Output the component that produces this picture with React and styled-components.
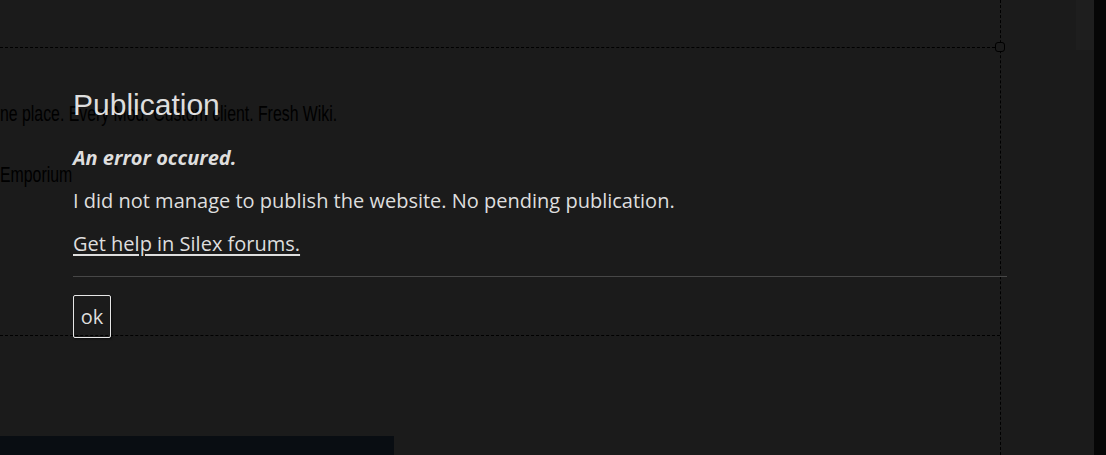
import React from "react";
import styled, { createGlobalStyle } from "styled-components";

const GlobalStyle = createGlobalStyle`
  html, body {
    margin: 0;
    padding: 0;
    background: #1b1b1b;
    overflow: hidden;
  }
`;

const Editor = styled.div`
  position: relative;
  display: flex;
  width: 1106px;
  height: 455px;
  background: #1b1b1b;
  overflow: hidden;
`;

const Stage = styled.div`
  position: relative;
  display: flex;
  flex-direction: column;
  width: 1000px;
  border-right: 1px dashed #000;
`;

const Section = styled.div`
  position: relative;
  height: ${(p) => p.$h}px;
  border-bottom: ${(p) => (p.$last ? "none" : "1px dashed #000")};
  display: flex;
  flex-direction: column;
  align-items: flex-start;
  padding: ${(p) => p.$pad || "0"};
  box-sizing: border-box;
  flex-shrink: 0;
`;

const Handle = styled.div`
  position: absolute;
  right: -5px;
  bottom: -5px;
  width: 8px;
  height: 8px;
  border: 1px solid #000;
  border-radius: 3px;
  background: #1b1b1b;
`;

/* the page font is a tall condensed face; squeeze a sans to get the look */
const PageText = styled.p`
  margin: 0 0 ${(p) => p.$mb || 0}px;
  font-family: "Liberation Sans", Arial, sans-serif;
  font-size: 22px;
  line-height: 24px;
  color: #000;
  white-space: nowrap;
  transform: scaleX(0.72);
  transform-origin: left center;
`;

const DarkBlock = styled.div`
  width: 394px;
  height: 40px;
  background: #090d12;
  margin-top: 100px;
`;

const Side = styled.div`
  flex: 1;
  display: flex;
  justify-content: flex-end;
`;

const Track = styled.div`
  width: 18px;
  display: flex;
  flex-direction: column;
`;

const Thumb = styled.div`
  height: 50px;
  background: #1e1e1e;
`;

const Scrollbar = styled.div`
  width: 12px;
  background: #060606;
`;

const Dialog = styled.div`
  position: absolute;
  left: 73px;
  top: 88px;
  width: 934px;
  color: #dedede;
  font-family: "Open Sans", sans-serif;
`;

const Title = styled.h2`
  margin: 0;
  font-family: "Liberation Sans", Arial, sans-serif;
  font-weight: normal;
  font-size: 30px;
  line-height: 34px;
`;

const Para = styled.p`
  margin: ${(p) => p.$mt}px 0 0;
  font-size: 20px;
  line-height: 26px;
  font-weight: ${(p) => (p.$strong ? 700 : 400)};
  font-style: ${(p) => (p.$strong ? "italic" : "normal")};
`;

const Link = styled.a`
  color: #dedede;
  text-decoration: underline;
  text-underline-offset: 3px;
`;

const Rule = styled.hr`
  margin: 19px 0 0;
  border: none;
  height: 1px;
  background: #474747;
`;

const OkButton = styled.button`
  display: block;
  margin-top: 18px;
  width: 38px;
  height: 43px;
  padding: 0;
  background: transparent;
  color: #dedede;
  border: 1px solid #e6e6e6;
  border-radius: 2px;
  font-family: "Open Sans", sans-serif;
  font-size: 20px;
  box-shadow: 1px 1px 2px rgba(0, 0, 0, 0.6);
`;

export default function App() {
  return (
    <>
      <GlobalStyle />
      <Editor>
        <Stage>
          <Section $h={48}>
            <Handle />
          </Section>
          <Section $h={288} $pad="54px 0 0">
            <PageText $mb={37}>ne place. Every Mod. Custom client. Fresh Wiki.</PageText>
            <PageText>Emporium</PageText>
          </Section>
          <Section $h={120} $last>
            <DarkBlock />
          </Section>
        </Stage>
        <Side>
          <Track>
            <Thumb />
          </Track>
          <Scrollbar />
        </Side>
        <Dialog>
          <Title>Publication</Title>
          <Para $strong $mt={23}>An error occured.</Para>
          <Para $mt={17}>I did not manage to publish the website. No pending publication.</Para>
          <Para $mt={17}>
            <Link href="#">Get help in Silex forums.</Link>
          </Para>
          <Rule />
          <OkButton>ok</OkButton>
        </Dialog>
      </Editor>
    </>
  );
}
